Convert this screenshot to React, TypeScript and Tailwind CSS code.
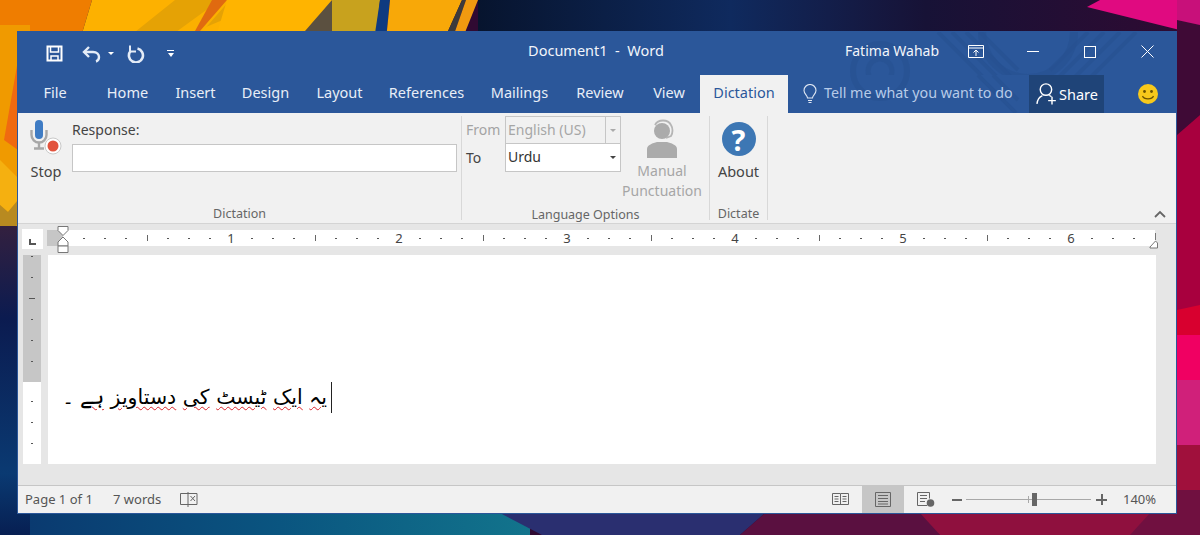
import React from 'react';

const tabs = [
  { label: 'File', w: 'w-[74px]' },
  { label: 'Home', w: 'w-[71px]' },
  { label: 'Insert', w: 'w-[65px]' },
  { label: 'Design', w: 'w-[75px]' },
  { label: 'Layout', w: 'w-[73px]' },
  { label: 'References', w: 'w-[101px]' },
  { label: 'Mailings', w: 'w-[85px]' },
  { label: 'Review', w: 'w-[76px]' },
  { label: 'View', w: 'w-[62px]' },
];

function Wallpaper() {
  return (
    <svg className="absolute inset-0" width="1200" height="535" viewBox="0 0 1200 535">
      <defs>
        <linearGradient id="navy" x1="0" y1="0" x2="1" y2="0">
          <stop offset="0" stopColor="#07142e" />
          <stop offset="0.35" stopColor="#0f2a5e" />
          <stop offset="0.62" stopColor="#171236" />
          <stop offset="1" stopColor="#300a32" />
        </linearGradient>
        <linearGradient id="left" x1="0" y1="0" x2="0" y2="1">
          <stop offset="0" stopColor="#33203f" />
          <stop offset="0.3" stopColor="#0b1b50" />
          <stop offset="0.8" stopColor="#0a3a72" />
          <stop offset="1" stopColor="#071f52" />
        </linearGradient>
        <linearGradient id="bottom" x1="0" y1="0" x2="1" y2="0">
          <stop offset="0" stopColor="#0a3a70" />
          <stop offset="0.5" stopColor="#0a5580" />
          <stop offset="1" stopColor="#12748c" />
        </linearGradient>
      </defs>
      <rect width="1200" height="535" fill="#300a32" />
      <rect x="478" width="722" height="40" fill="url(#navy)" />
      <polygon points="0,0 92,0 80,40 0,40" fill="#ef7d00" />
      <polygon points="0,25 30,25 30,230 0,230" fill="#f09a00" />
      <polygon points="18,60 18,150 4,140" fill="#f06a10" />
      <polygon points="0,160 18,178 18,200 8,212 0,205" fill="#f5b010" />
      <polygon points="0,205 8,212 18,200 18,225 0,232" fill="#b88a20" />
      <rect y="226" width="30" height="309" fill="url(#left)" />
      <polygon points="92,0 280,0 250,40 80,40" fill="#fdb100" />
      <polygon points="175,0 270,0 175,40 125,40" fill="#e5a205" />
      <polygon points="220,0 230,0 195,40 165,40" fill="#fbb000" />
      <polygon points="212,0 227,0 200,31 195,31" fill="#e06a10" />
      <polygon points="227,0 332,0 332,40 215,40" fill="#ffb400" />
      <polygon points="332,0 332,31 305,31" fill="#5b5040" />
      <polygon points="332,0 380,0 376,40 332,40" fill="#c8a21e" />
      <polygon points="380,0 390,0 386,40 374,40" fill="#0e3a80" />
      <polygon points="390,0 462,0 444,40 386,40" fill="#f8a808" />
      <polygon points="462,0 466,0 452,40 444,40" fill="#3c3a3c" />
      <polygon points="466,0 478,0 462,40 452,40" fill="#f09a10" />
      <polygon points="1100,0 1200,0 1200,35 1087,7" fill="#e00a80" />
      <polygon points="1177,0 1200,0 1200,25 1177,20" fill="#c8107a" />
      <polygon points="1177,20 1200,25 1200,115 1177,135" fill="#3f0a36" />
      <polygon points="1177,135 1200,115 1200,312 1177,312" fill="#a8003e" />
      <polygon points="1177,310 1200,305 1200,335 1177,335" fill="#d8002f" />
      <rect x="1177" y="335" width="23" height="70" fill="#f00062" />
      <rect x="1177" y="380" width="23" height="65" fill="#d0207a" />
      <rect x="1177" y="445" width="23" height="60" fill="#a0103c" />
      <rect x="1177" y="490" width="23" height="45" fill="#701040" />
      <rect x="30" y="513" width="500" height="22" fill="url(#bottom)" />
      <polygon points="500,513 765,513 740,535 542,535" fill="#2a2f70" />
      <polygon points="765,513 925,513 940,535 740,535" fill="#5a1040" />
      <polygon points="920,513 1177,513 1200,513 1200,535 940,535" fill="#8f103e" />
      <polygon points="1150,513 1200,513 1200,535 1130,535" fill="#701040" />
    </svg>
  );
}

function TitlePattern() {
  return (
    <svg className="absolute left-0 top-0 pointer-events-none" width="1158" height="82" viewBox="0 0 1158 82" fill="none" stroke="#265090" strokeOpacity="0.55">
      <circle cx="862" cy="39" r="12" strokeWidth="5" />
      <circle cx="862" cy="39" r="27" strokeWidth="6" />
      <circle cx="1010" cy="0" r="46" strokeWidth="8" />
      <path d="M920 0l64 64M934 0l64 64M948 0l52 52M962 0l38 38" strokeWidth="4" />
      <path d="M1070 0l-38 38M1086 0l-46 46M1102 0l-46 46M1118 0l-46 46" strokeWidth="4" />
    </svg>
  );
}

function RulerTick({ label, long }: { label?: string; long?: boolean }) {
  return (
    <div className="w-[21px] shrink-0 flex items-center justify-center">
      {label ? (
        <span className="text-[13px] leading-none text-[#444]">{label}</span>
      ) : long ? (
        <span className="w-px h-[6px] bg-[#666]" />
      ) : (
        <span className="w-[2px] h-px bg-[#555]" />
      )}
    </div>
  );
}

function GroupLabel({ children }: { children: React.ReactNode }) {
  return <div className="h-[20px] pt-[7px] text-center text-[12.5px] leading-[14px] text-[#666]">{children}</div>;
}

function ComboArrow({ muted }: { muted?: boolean }) {
  return <span className={`w-0 h-0 border-x-[3px] border-x-transparent border-t-[3px] ${muted ? 'border-t-[#aaa]' : 'border-t-[#444]'}`} />;
}

function Misspelt({ children }: { children: React.ReactNode }) {
  return <span className="underline decoration-wavy decoration-[#d8232a] decoration-1 underline-offset-2">{children}</span>;
}

export default function App() {
  const hTicks: { label?: string; long?: boolean }[] = [];
  for (let i = 0; i <= 51; i++) {
    if (i === 0) hTicks.push({});
    else if (i % 8 === 0) hTicks.push({ label: String(i / 8) });
    else if (i % 4 === 0) hTicks.push({ long: true });
    else hTicks.push({});
  }

  return (
    <div className="relative w-[1200px] h-[535px] overflow-hidden font-['Noto_Sans',sans-serif]">
      <Wallpaper />
      <div className="relative ml-[17px] mt-[31px] w-[1160px] h-[483px] border border-[#2b579a] flex flex-col bg-[#e6e6e6]">
        {/* Title bar */}
        <div className="relative h-[43px] shrink-0 bg-[#2b579a] flex items-center text-white">
          <TitlePattern />
          <svg className="relative ml-[28px]" width="17" height="17" viewBox="0 0 17 17" fill="none" stroke="#fff" strokeWidth="2">
            <path d="M1.5 1.5h14v14h-14z" />
            <path d="M4.500 2v5h8V2" strokeWidth="1.500" />
            <path d="M5 15.500v-4.500h7v4.500" strokeWidth="1.500" />
          </svg>
          <svg className="relative ml-[19px]" width="20" height="18" viewBox="0 0 20 18" fill="none" stroke="#e4ecf7" strokeWidth="2.400">
            <path d="M7 2L2 7l5 5" />
            <path d="M2 7h9c4 0 6 2.500 6 5s-1.500 4-3 4.500" />
          </svg>
          <span className="relative ml-[6px] w-0 h-0 border-x-[3px] border-x-transparent border-t-[3px] border-t-white" />
          <svg className="relative ml-[12px]" width="19" height="19" viewBox="0 0 19 19" fill="none" stroke="#e4ecf7" strokeWidth="2.600">
            <path d="M11.500 4.600A7 7 0 1 1 4.500 7" />
            <path d="M4 1.500v6h6" strokeWidth="2" />
          </svg>
          <div className="relative ml-[22px] flex flex-col items-center gap-[2px]">
            <span className="w-[7px] h-px bg-white" />
            <span className="w-0 h-0 border-x-[3.5px] border-x-transparent border-t-[4px] border-t-white" />
          </div>
          <div className="relative ml-[352px] w-[140px] pb-[6px] text-[14.5px] text-center whitespace-nowrap text-[#f2f5fa]">Document1&nbsp; -&nbsp; Word</div>
          <div className="relative ml-[179px] w-[98px] pb-[6px] text-[14px] whitespace-nowrap text-[#f2f5fa]">Fatima Wahab</div>
          <svg className="relative ml-[25px] -mt-[4px]" width="16" height="13" viewBox="0 0 16 13" fill="none" stroke="#fff">
            <path d="M.5.500h15v12H.5z" />
            <path d="M.5 3h15" />
            <path d="M8 11V5M5.500 7.500L8 5l2.500 2.500" />
          </svg>
          <span className="relative ml-[43px] -mt-[4px] w-[12px] h-px bg-white" />
          <span className="relative ml-[45px] -mt-[4px] w-[12px] h-[12px] border border-white" />
          <svg className="relative ml-[45px] -mt-[4px]" width="13" height="13" viewBox="0 0 13 13" stroke="#fff">
            <path d="M.5.500l12 12M12.500.500l-12 12" />
          </svg>
        </div>

        {/* Tabs */}
        <div className="relative h-[38px] shrink-0 bg-[#2b579a] flex items-stretch text-[14.5px] text-[#e8eef7]">
          <svg className="absolute left-0 bottom-0 pointer-events-none" width="1158" height="38" viewBox="0 43 1158 38" fill="none" stroke="#265090" strokeOpacity="0.55">
            <circle cx="862" cy="39" r="27" strokeWidth="6" />
            <path d="M960 43l38 38M975 43l25 25" strokeWidth="4" />
          </svg>
          {tabs.map((tab) => (
            <div key={tab.label} className={`relative ${tab.w} flex items-center justify-center pb-[2px]`}>
              {tab.label}
            </div>
          ))}
          <div className="relative w-[88px] bg-[#f1f1f1] text-[#2b579a] flex items-center justify-center pb-[2px]">Dictation</div>
          <svg className="relative ml-[15px] self-center" width="14" height="20" viewBox="0 0 14 20" fill="none" stroke="#dfe7f3" strokeWidth="1.100">
            <path d="M4.500 14c0-2.500-3.500-4-3.500-7.500a6 6 0 0 1 12 0c0 3.500-3.500 5-3.500 7.500z" />
            <path d="M5 16.500h4M5.500 18.500h3" />
          </svg>
          <div className="relative ml-[7px] w-[205px] flex items-center text-[14.3px] text-[#b7cbe8] whitespace-nowrap pb-[2px]">Tell me what you want to do</div>
          <div className="relative w-[75px] bg-[#1f4478] flex items-center text-white">
            <svg className="ml-[7px]" width="21" height="22" viewBox="0 0 19 20" fill="none" stroke="#fff" strokeWidth="1.300">
              <circle cx="9" cy="6" r="5.200" />
              <path d="M.8 19c.5-4 2.500-6.500 5-7.500M12 11.300c.8.300 1.500.700 2 1.200" />
              <path d="M14.500 12.500v7M11 16h7" />
            </svg>
            <span className="ml-[2px] pt-[1px]">Share</span>
          </div>
          <svg className="relative ml-[34px] self-center" width="20" height="20" viewBox="0 0 20 20">
            <circle cx="10" cy="10" r="10" fill="#f7c91b" />
            <circle cx="6.500" cy="7.500" r="1.400" fill="#6a5200" />
            <circle cx="13.500" cy="7.500" r="1.400" fill="#6a5200" />
            <path d="M4.500 12c1.500 3.800 9.500 3.800 11 0" fill="none" stroke="#6a5200" strokeWidth="1.200" />
          </svg>
        </div>

        {/* Ribbon */}
        <div className="h-[111px] shrink-0 bg-[#f1f1f1] border-b border-[#d4d4d4] flex items-stretch">
          <div className="w-[444px] border-r border-[#d8d8d8] my-[3px] flex flex-col justify-between">
            <div className="flex">
              <div className="w-[54px] flex flex-col items-center">
                <svg className="mt-[3px] ml-[2px]" width="34" height="36" viewBox="0 0 34 36" fill="none">
                  <rect x="6" y="1" width="8" height="19" rx="4" fill="#3f7cc4" />
                  <path d="M2.500 11v5a7.500 7.500 0 0 0 15 0v-5" stroke="#a8a8a8" strokeWidth="2.400" />
                  <path d="M10 23v6M5 29.500h10" stroke="#a8a8a8" strokeWidth="2.400" />
                  <circle cx="24" cy="27" r="8" fill="#fff" stroke="#c9c9c9" />
                  <circle cx="24" cy="27" r="5.500" fill="#e2533d" />
                </svg>
                <span className="mt-[6px] ml-[2px] text-[14.5px] leading-[20px] text-[#444]">Stop</span>
              </div>
              <div className="flex flex-col">
                <span className="h-[28px] pt-[3px] text-[14px] leading-[22px] text-[#444]">Response:</span>
                <div className="w-[385px] h-[28px] bg-white border border-[#c6c6c6]" />
              </div>
            </div>
            <GroupLabel>Dictation</GroupLabel>
          </div>

          <div className="w-[248px] border-r border-[#d8d8d8] my-[3px] flex flex-col justify-between">
            <div className="flex">
              <div className="flex flex-col ml-[4px] w-[39px] text-[14px]">
                <span className="h-[28px] leading-[28px] text-[#a3a3a3]">From</span>
                <span className="h-[28px] leading-[28px] text-[#444]">To</span>
              </div>
              <div className="w-[116px] flex flex-col">
                <div className="h-[28px] border border-[#c6c6c6] flex text-[14px] text-[#a6a6a6]">
                  <span className="flex-1 pl-[2px] leading-[25px] whitespace-nowrap">English (US)</span>
                  <span className="w-[15px] border-l border-[#c6c6c6] flex items-center justify-center"><ComboArrow muted /></span>
                </div>
                <div className="h-[29px] -mt-px bg-white border border-[#c6c6c6] flex text-[14px] text-[#333]">
                  <span className="flex-1 pl-[2px] leading-[26px]">Urdu</span>
                  <span className="w-[15px] flex items-center justify-center"><ComboArrow /></span>
                </div>
              </div>
              <div className="ml-[1px] w-[80px] flex flex-col items-center text-center text-[14px] leading-[20px] text-[#a6a6a6]">
                <svg className="mt-[3px]" width="32" height="39" viewBox="0 0 32 39" fill="none">
                  <circle cx="16" cy="12" r="8" fill="#ababab" />
                  <path d="M9 6c3-6 13-6 16 0 2 3 2 8 0 11l-5 2" stroke="#b5b5b5" strokeWidth="1.800" />
                  <path d="M1 39v-9c0-4 6-6 10-7h10c4 1 10 3 10 7v9z" fill="#ababab" />
                </svg>
                <span className="mt-[3px]">Manual</span>
                <span className="whitespace-nowrap">Punctuation</span>
              </div>
            </div>
            <GroupLabel>Language Options</GroupLabel>
          </div>

          <div className="w-[58px] border-r border-[#d8d8d8] my-[3px] flex flex-col justify-between">
            <div className="flex flex-col items-center">
              <div className="mt-[6px] w-[34px] h-[34px] rounded-full bg-[#3d77b4] flex items-center justify-center text-white text-[29px] leading-none font-bold">?</div>
              <span className="mt-[5px] text-[14.5px] leading-[20px] text-[#444]">About</span>
            </div>
            <GroupLabel>Dictate</GroupLabel>
          </div>

          <div className="flex-1 flex items-end justify-end pr-[10px] pb-[5px]">
            <svg width="12" height="8" viewBox="0 0 12 8" fill="none" stroke="#666" strokeWidth="1.800">
              <path d="M1 7l5-5 5 5" />
            </svg>
          </div>
        </div>

        {/* Horizontal ruler */}
        <div className="h-[31px] shrink-0 flex items-start pt-[6px]">
          <div className="ml-[4px] w-[21px] h-[20px] -mt-px bg-white flex items-end justify-center pb-[4px]">
            <div className="w-[7px] h-[6px] border-l-2 border-b-2 border-[#555]" />
          </div>
          <div className="relative ml-[4px] h-[16px] w-[1108px] flex">
            <div className="w-[16px] bg-[#c6c6c6] shrink-0" />
            <div className="w-[1092px] shrink-0 bg-white flex overflow-hidden">
              <div className="flex -ml-[10.5px]">
                {hTicks.map((t, i) => (
                  <RulerTick key={i} label={t.label} long={t.long} />
                ))}
              </div>
            </div>
            {/* indent markers */}
            <svg className="absolute left-[10px] -top-[4px]" width="12" height="28" viewBox="0 0 12 28" fill="#fff" stroke="#777">
              <path d="M1 .5h10v4l-5 5-5-5z" />
              <path d="M6 11l5 5v4H1v-4z" />
              <path d="M1 20h10v6.500H1z" />
            </svg>
            <svg className="absolute left-[1102px] top-[2px]" width="10" height="18" viewBox="0 0 10 18" fill="#fff" stroke="#777">
              <path d="M6.500 1v7" />
              <path d="M6.500 9l2 2v5H1v-1z" />
            </svg>
          </div>
        </div>

        {/* Document */}
        <div className="h-[209px] shrink-0 flex">
          <div className="ml-[5px] w-[18px] flex flex-col">
            <div className="h-[129px] bg-[#c6c6c6] flex flex-col items-center">
              {[0, 1, 2, 3, 4, 5].map((i) => (
                <div key={i} className="h-[21px] flex items-start justify-center pt-px shrink-0">
                  <span className={`h-px bg-[#555] ${i === 2 ? 'w-[6px]' : 'w-[2px]'}`} />
                </div>
              ))}
            </div>
            <div className="flex-1 bg-white flex flex-col items-center pt-[19px]">
              {[0, 1, 2].map((i) => (
                <div key={i} className="h-[21px] flex items-start justify-center shrink-0">
                  <span className="w-[2px] h-px bg-[#555]" />
                </div>
              ))}
            </div>
          </div>
          <div className="ml-[7px] w-[1108px] bg-white pl-[4px] pt-[127px]">
            <div dir="rtl" className="w-[284px] flex justify-start items-center h-[31px] pr-[4px]">
              <span className="w-px h-[31px] bg-[#222] shrink-0 ml-[4px]" />
              <span className="font-['DejaVu_Sans',sans-serif] text-[20.5px] leading-[31px] text-black whitespace-nowrap">
                <Misspelt>یہ</Misspelt> <Misspelt>ایک</Misspelt> <Misspelt>ٹیسٹ</Misspelt> <Misspelt>کی</Misspelt> <Misspelt>دستاویز</Misspelt> <Misspelt>ہے</Misspelt> ۔
              </span>
            </div>
          </div>
        </div>

        <div className="flex-1" />

        {/* Status bar */}
        <div className="h-[28px] shrink-0 bg-[#f1f1f1] border-t border-[#c6c6c6] flex items-stretch text-[13px] text-[#555]">
          <span className="ml-[7px] w-[88px] flex items-center">Page 1 of 1</span>
          <span className="w-[67px] flex items-center">7 words</span>
          <svg className="self-center" width="18" height="15" viewBox="0 0 18 15" fill="none" stroke="#666">
            <path d="M8 1.500H.5v11H8M8 0v15M8 1.500h9v11H8" />
            <path d="M10.500 4l4.500 5M15 4l-4.500 5" />
          </svg>
          <div className="flex-1" />
          <svg className="self-center" width="17" height="15" viewBox="0 0 17 15" fill="none" stroke="#666">
            <path d="M8.500 2v11M.5 1.500h8M8.500 1.500h8v11h-8M.5 1.500v11h8" />
            <path d="M2.500 4.500h4M2.500 7h4M2.500 9.500h4M10.500 4.500h4M10.500 7h4M10.500 9.500h4" />
          </svg>
          <div className="ml-[13px] w-[42px] bg-[#c6c6c6] flex items-center justify-center">
            <svg width="16" height="15" viewBox="0 0 16 15" fill="none" stroke="#666">
              <path d="M.5.500h15v14H.5zM3 3.500h10M3 6.500h10M3 9.500h10M3 12h10" />
            </svg>
          </div>
          <svg className="self-center ml-[13px]" width="18" height="15" viewBox="0 0 18 15" fill="none" stroke="#666">
            <path d="M10 13.500H.5V.5h12v6" />
            <path d="M3 3.500h7M3 6.500h7M3 9.500h5" />
            <circle cx="13.500" cy="11" r="3.800" fill="#666" stroke="none" />
          </svg>
          <div className="ml-[17px] self-center w-[10px] h-[2px] bg-[#666]" />
          <div className="ml-[4px] w-[125px] self-center relative h-px bg-[#a8a8a8]">
            <span className="absolute left-[66px] -top-[6px] w-[5px] h-[13px] bg-[#666]" />
            <span className="absolute left-[62px] -top-[3px] w-px h-[7px] bg-[#a8a8a8]" />
          </div>
          <div className="ml-[5px] self-center relative w-[11px] h-[11px] flex items-center justify-center">
            <span className="w-[11px] h-[2px] bg-[#666]" />
            <span className="absolute w-[2px] h-[11px] bg-[#666]" />
          </div>
          <span className="ml-[16px] w-[53px] flex items-center">140%</span>
        </div>
      </div>
    </div>
  );
}
